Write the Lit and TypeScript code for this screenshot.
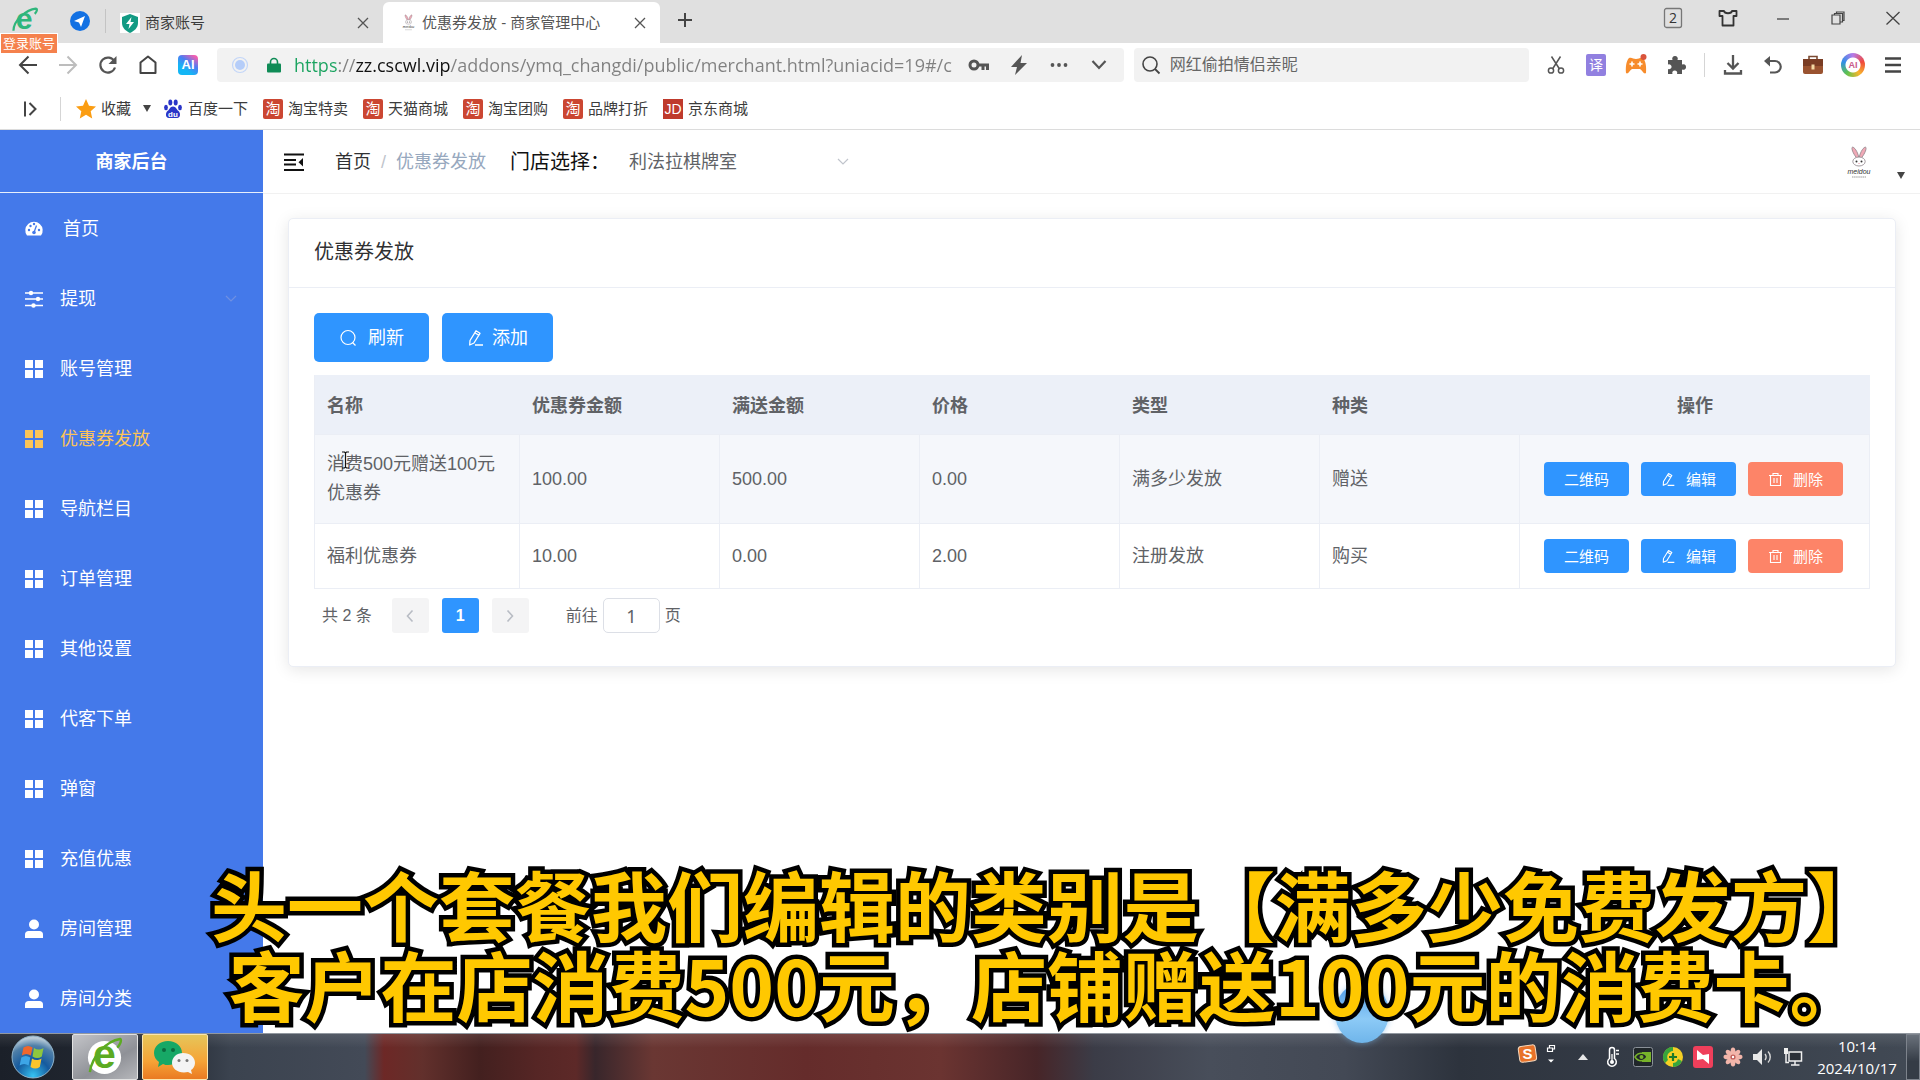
import { LitElement, html, css, svg, nothing, TemplateResult } from "lit";
import { customElement, property, state } from "lit/decorators.js";
import { classMap } from "lit/directives/class-map.js";

/* ---------- shared ---------- */

const base = css`
  *,
  *::before,
  *::after {
    box-sizing: border-box;
  }
  :host {
    display: block;
    font-family: "Liberation Sans", "Noto Sans CJK SC", sans-serif;
  }
  button,
  input,
  select {
    font: inherit;
    color: inherit;
    margin: 0;
    padding: 0;
    border: 0;
    background: none;
    outline: 0;
  }
  button {
    cursor: pointer;
  }
  a {
    color: inherit;
    text-decoration: none;
  }
  svg {
    display: block;
    flex: none;
    overflow: visible;
  }
`;

const icon = (w: number, h: number, body: TemplateResult, box = `0 0 ${w} ${h}`) =>
  html`<svg width=${w} height=${h} viewBox=${box} fill="none" aria-hidden="true">${body}</svg>`;

const rabbit = (w: number, h: number) =>
  icon(
    w,
    h,
    svg`<g stroke="#8d8288" stroke-width=".8">
      <path d="M10.500 13C7 9 4.500 4 5 1.500 6.500-.2 10.500 5 11.700 11z" fill="#f0a9b6"/>
      <path d="M13.500 13C17 9 19.500 4 19 1.500 17.500-.2 13.500 5 12.300 11z" fill="#f0a9b6"/>
      <ellipse cx="12" cy="15.500" rx="6.200" ry="4.500" fill="#fff"/>
    </g>
    <circle cx="9.500" cy="15.500" r="1" fill="#333"/><circle cx="14.500" cy="15.500" r="1" fill="#333"/>
    <path d="M11.500 17.500h1" stroke="#e58a9a"/>
    <text x="12" y="27.500" text-anchor="middle" font-size="7" font-style="italic" fill="#333" font-family="Liberation Sans, sans-serif">meidou</text>
    <path d="M5 31h14" stroke="#999" stroke-width="1" stroke-dasharray="1.500 .6"/>`,
    "-1 0 26 33"
  );

/* ---------- browser window frame ---------- */

const closeX = icon(14, 14, svg`<path d="M2 2l10 10M12 2L2 12" stroke="#555" stroke-width="1.300"/>`);

const I = {
  logo: icon(
    32,
    32,
    svg`<text x="15" y="25" text-anchor="middle" font-family="Liberation Sans, sans-serif" font-weight="700" font-size="34" fill="#2fb67c">e</text>
    <path d="M3 27C3 15 18 3 28 2c2 0 2 3-1 6" stroke="#2fb67c" stroke-width="2.500"/>`,
    "0 -2 32 36"
  ),
  plane: icon(
    22,
    22,
    svg`<circle cx="11" cy="11" r="10" fill="#1371e3"/><path d="M16 6L5 11l5 1.500L12 17z" fill="#fff"/>`
  ),
  shield: icon(
    20,
    20,
    svg`<path d="M0 0h20v20H0z" fill="#fff"/><path d="M10 1l8 3v6c0 5-4 8-8 10-4-2-8-5-8-10V4z" fill="#129a83"/><path d="M11.500 4L6 11h3.500L8.500 16 14 9h-3.500z" fill="#fff"/>`
  ),
  plus: icon(18, 18, svg`<path d="M9 2v14M2 9h14" stroke="#444" stroke-width="2"/>`),
  count: icon(
    20,
    22,
    svg`<rect x="1.500" y="1.500" width="17" height="19" rx="2" stroke="#777" stroke-width="1.300"/><text x="10" y="16" text-anchor="middle" font-size="14" font-family="Open Sans, sans-serif" fill="#333">2</text>`
  ),
  shirt: icon(
    20,
    18,
    svg`<path d="M1.500 2h4.500c.5 3 7.500 3 8 0h4.500v5h-3v9.500h-11V7h-3z" stroke="#333" stroke-width="1.800" stroke-linejoin="round"/>`
  ),
  min: icon(14, 14, svg`<path d="M1 8h12" stroke="#444" stroke-width="1.300"/>`),
  restore: icon(
    16,
    16,
    svg`<path d="M2 5h8v9H2zM4.500 5V3.500h8V12H10.500M6.500 3.500V2H14v8.500h-1.500" stroke="#444" stroke-width="1.200"/>`
  ),
  winClose: icon(16, 16, svg`<path d="M1.500 2l13 12.500M14.500 2l-13 12.500" stroke="#444" stroke-width="1.300"/>`),
  back: icon(20, 20, svg`<path d="M19 10H2M10.500 1.500L2 10l8.500 8.500" stroke="#444" stroke-width="2"/>`),
  forward: icon(20, 20, svg`<path d="M1 10h17M9.500 1.500L18 10l-8.500 8.500" stroke="#bdbdbd" stroke-width="2"/>`),
  reload: icon(
    20,
    20,
    svg`<path d="M17 12.500A7.500 7.500 0 1 1 16.500 6.500" stroke="#555" stroke-width="2.200"/><path d="M18.500 1v8h-8z" fill="#555"/>`
  ),
  home: icon(
    20,
    20,
    svg`<path d="M2.500 7.500L10 1.500l7.500 6V18h-15z" stroke="#444" stroke-width="2" stroke-linejoin="round"/>`
  ),
  ai: html`<span class="ai">AI</span>`,
  site: icon(
    18,
    18,
    svg`<circle cx="9" cy="9" r="7.500" stroke="#c3d6f8" stroke-width="1.200"/><circle cx="9" cy="9" r="5" fill="#b5cdf9"/>`
  ),
  lock: icon(
    14,
    16,
    svg`<path d="M3.500 7V5a3.500 3.500 0 0 1 7 0v2" stroke="#0f8b56" stroke-width="1.600"/><rect y="6.500" width="14" height="9" rx="1" fill="#0f8b56"/>`
  ),
  key: icon(
    22,
    14,
    svg`<circle cx="6" cy="7" r="4" stroke="#555" stroke-width="3"/><path d="M10 7h11M15 7v5M19.500 7v5" stroke="#555" stroke-width="3"/>`
  ),
  bolt: icon(16, 20, svg`<path d="M11 0L0 12h6L4 20 16 8H9.500z" fill="#555"/>`),
  dots: icon(
    18,
    6,
    svg`<circle cx="2.500" cy="3" r="1.900" fill="#555"/><circle cx="9" cy="3" r="1.900" fill="#555"/><circle cx="15.500" cy="3" r="1.900" fill="#555"/>`
  ),
  down: icon(16, 12, svg`<path d="M1.500 2L8 9l6.500-7" stroke="#555" stroke-width="2.200"/>`),
  search: icon(
    20,
    20,
    svg`<circle cx="9" cy="9" r="7" stroke="#444" stroke-width="1.600"/><path d="M14 14l4.500 4.500" stroke="#444" stroke-width="1.800"/>`
  ),
  scissors: icon(
    18,
    20,
    svg`<g stroke="#555" stroke-width="1.500"><path d="M4.500 1.500l8 12.500M13.500 1.500L5.500 14"/><circle cx="4" cy="15.500" r="2.600"/><circle cx="14" cy="15.500" r="2.600"/></g>`
  ),
  translate: html`<span class="tr">译</span>`,
  game: icon(
    24,
    24,
    svg`<path d="M5 5c3-1 4 1 7 1s4-2 7-1c3 3 3.500 10 3 15-2 2-4-3-6-4H8c-2 1-4 6-6 4C1.500 15 2 8 5 5z" fill="#f78c2c"/><path d="M8 8.500v5M5.500 11h5" stroke="#fff" stroke-width="1.600"/><path d="M16 8.500v5M13.500 11h5" stroke="#fff" stroke-width="1.600"/><circle cx="19.500" cy="4" r="3" fill="#d9543c"/>`
  ),
  puzzle: icon(
    20,
    20,
    svg`<path d="M2 5h4.500a2.800 2.800 0 1 1 5 0H16v4.500a2.800 2.800 0 1 1 0 5V19h-5a2.500 2.500 0 1 0-4.500 0H2v-5a2.500 2.500 0 1 0 0-4.500z" fill="#555"/>`
  ),
  download: icon(
    20,
    20,
    svg`<path d="M10 0v13M4.500 8L10 13.500 15.500 8M2 15v3.500h16V15" stroke="#555" stroke-width="2.300"/>`
  ),
  undo: icon(
    20,
    20,
    svg`<path d="M3 6h9a5.500 5.500 0 0 1 0 11.500H7" stroke="#555" stroke-width="2.200"/><path d="M7 1L1 6l6 5.500z" fill="#555"/>`
  ),
  briefcase: icon(
    22,
    20,
    svg`<path d="M7 5V1.500h8V5" stroke="#7b4a32" stroke-width="1.600"/><rect x="1" y="4" width="20" height="15" rx="2" fill="#9a5330"/><path d="M1 4h20v7H1z" fill="#7a3d24"/><rect x="9.500" y="9.500" width="3" height="5" fill="#f3d9a4"/>`
  ),
  menu: icon(18, 18, svg`<path d="M1 2.500h16M1 9h16M1 15.500h16" stroke="#444" stroke-width="2.300"/>`),
  panel: icon(16, 18, svg`<path d="M2 1.500v15" stroke="#444" stroke-width="2"/><path d="M6.500 3l6 6-6 6" stroke="#444" stroke-width="2"/>`),
  star: icon(
    20,
    20,
    svg`<path d="M10 0l3 6.700 7 .7-5.300 4.800L16.200 19.500 10 15.800 3.800 19.500l1.500-7.300L0 7.400l7-.7z" fill="#fb9d12"/>`
  ),
  caret: icon(8, 7, svg`<path d="M0 0h8L4 7z" fill="#444"/>`),
  baidu: icon(
    18,
    20,
    svg`<g fill="#2a35c8"><ellipse cx="6.300" cy="3.500" rx="2" ry="3"/><ellipse cx="11.700" cy="3.500" rx="2" ry="3"/><ellipse cx="2" cy="8.500" rx="1.900" ry="2.700"/><ellipse cx="16" cy="8.500" rx="1.900" ry="2.700"/><path d="M9 7.500c3 0 3.500 3 5.500 4.500s2.500 7-1.500 7c-2 0-6 0-8 0-4 0-3.500-5.500-1.500-7S6 7.500 9 7.500z"/></g><text x="9" y="17.500" text-anchor="middle" font-size="8" font-weight="700" fill="#fff" font-family="Liberation Sans, sans-serif">du</text>`
  ),
};

const bookmarks = [
  { name: "淘宝特卖", mark: "淘", jd: false },
  { name: "天猫商城", mark: "淘", jd: false },
  { name: "淘宝团购", mark: "淘", jd: false },
  { name: "品牌打折", mark: "淘", jd: false },
  { name: "京东商城", mark: "JD", jd: true },
];

@customElement("browser-frame")
export class BrowserFrame extends LitElement {
  static styles = [
    base,
    css`
      :host {
        font-size: 15px;
        line-height: 20px;
        color: #3c3c3c;
      }
      .tabs {
        display: flex;
        align-items: flex-end;
        height: 43px;
        background: #e0e0e0;
      }
      .brand {
        position: relative;
        display: flex;
        align-items: center;
        gap: 28px;
        width: 106px;
        height: 43px;
        padding: 0 0 2px 9px;
      }
      .brand::after {
        content: "";
        width: 1px;
        height: 24px;
        margin-left: -14px;
        background: #c4c4c4;
      }
      .badge {
        position: absolute;
        z-index: 2;
        left: 0;
        top: 33px;
        padding: 0 2px;
        border: 1px solid #fff;
        background: #f5814d;
        color: #fff;
        font-size: 13px;
        line-height: 19px;
        white-space: nowrap;
      }
      .tab {
        display: flex;
        align-items: center;
        width: 277px;
        height: 41px;
        padding: 0 13px 0 14px;
        border-radius: 6px 6px 0 0;
      }
      .tab.on {
        padding-left: 19px;
        background: #fff;
      }
      .tab.on .title {
        gap: 7px;
        color: #555;
      }
      .title {
        display: flex;
        flex: 1;
        align-items: center;
        gap: 5px;
        text-align: left;
        white-space: nowrap;
      }
      .new {
        height: 43px;
        margin: 0 16px 2px;
      }
      .win {
        display: flex;
        align-self: flex-start;
        margin-left: auto;
        height: 35px;
      }
      .win button {
        display: grid;
        place-items: center;
        width: 55px;
      }
      .bar {
        display: flex;
        align-items: center;
        height: 44px;
        padding: 0 7px 0 8px;
        background: #fff;
      }
      .cell {
        display: grid;
        place-items: center;
        width: 40px;
        height: 40px;
        flex: none;
      }
      .split {
        width: 1px;
        height: 24px;
        margin: 0 8px;
        background: #d5d5d5;
      }
      .ai {
        width: 20px;
        height: 20px;
        border-radius: 4px;
        background: linear-gradient(35deg, #14b6f5 30%, #4d7df2 60%, #f25fb0 90%);
        color: #fff;
        font-size: 13px;
        font-weight: 700;
      }
      .ring {
        display: grid;
        place-items: center;
        width: 24px;
        height: 24px;
        border-radius: 50%;
        background: radial-gradient(circle, #fff 0 7px, transparent 8px),
          conic-gradient(#b67be8, #f0483c, #f7b52c, #5fc24f, #2f8fe8, #b67be8);
        color: #c85a8a;
        font-size: 9px;
        font-weight: 700;
      }
      .tr {
        width: 20px;
        height: 22px;
        border-radius: 2px;
        background: #9180e0;
        color: #fff;
        font-size: 14px;
        line-height: 22px;
      }
      .field {
        display: flex;
        align-items: center;
        min-width: 0;
        height: 34px;
        border-radius: 4px;
        background: #f2f2f2;
      }
      .address {
        flex: 16 1 0;
        margin: 0 10px 0 9px;
        padding: 0 5px 0 14px;
      }
      .find {
        flex: 7 1 0;
        margin-right: 7px;
        padding-left: 7px;
      }
      .field input {
        flex: 1;
        min-width: 0;
        height: 30px;
      }
      .address .lock {
        margin: 0 13px 0 18px;
      }
      .address input {
        font-family: "Open Sans", sans-serif;
        font-size: 18px;
        background: linear-gradient(
          90deg,
          #19a35f 0 44px,
          #808080 44px 62px,
          #111 62px 157px,
          #808080 157px
        );
        -webkit-background-clip: text;
        background-clip: text;
        -webkit-text-fill-color: transparent;
      }
      .find input {
        margin-left: 9px;
        font-size: 16px;
      }
      .find input::placeholder {
        color: #666;
        opacity: 1;
      }
      .marks {
        display: flex;
        align-items: center;
        height: 43px;
        padding: 1px 0 0 23px;
        border-bottom: 1px solid #dcdcdc;
        background: #fff;
      }
      .marks .split {
        margin: 0 15px 0 21px;
      }
      .mark {
        display: flex;
        align-items: center;
        gap: 5px;
        margin-right: 15px;
        white-space: nowrap;
      }
      .mark.fav {
        margin-right: 13px;
      }
      .mark.fav span {
        margin-right: 7px;
      }
      .mark.baidu {
        gap: 6px;
      }
      .chip {
        width: 20px;
        height: 20px;
        border-radius: 2px;
        background: #cb4632;
        color: #fff;
        font-size: 15px;
        text-align: center;
      }
      .chip.jd {
        border-radius: 0;
        background: #bf3a2c;
        font-size: 14px;
      }
    `,
  ];

  private cell(label: string, glyph: unknown) {
    return html`<button class="cell" aria-label=${label}>${glyph}</button>`;
  }

  render() {
    return html`
      <div class="tabs">
        <div class="brand">${I.logo}${I.plane}<span class="badge">登录账号</span></div>
        <div class="tab">
          <button class="title">${I.shield}商家账号</button>
          <button aria-label="关闭">${closeX}</button>
        </div>
        <div class="tab on">
          <button class="title">${rabbit(13, 17)}优惠券发放 - 商家管理中心</button>
          <button aria-label="关闭">${closeX}</button>
        </div>
        <button class="new" aria-label="新建">${I.plus}</button>
        <div class="win">
          <button aria-label="窗口">${I.count}</button>
          <button aria-label="皮肤">${I.shirt}</button>
          <button aria-label="最小化">${I.min}</button>
          <button aria-label="还原">${I.restore}</button>
          <button aria-label="关闭">${I.winClose}</button>
        </div>
      </div>
      <div class="bar">
        ${this.cell("后退", I.back)}${this.cell("前进", I.forward)}${this.cell("刷新", I.reload)}
        ${this.cell("主页", I.home)}${this.cell("AI", I.ai)}
        <div class="field address">
          ${I.site}<span class="lock">${I.lock}</span>
          <input
            aria-label="地址"
            value="https://zz.cscwl.vip/addons/ymq_changdi/public/merchant.html?uniacid=19#/c"
          />
          ${this.cell("密码", I.key)}${this.cell("加速", I.bolt)}${this.cell("更多", I.dots)}
          ${this.cell("展开", I.down)}
        </div>
        <div class="field find">
          ${I.search}<input aria-label="搜索" placeholder="网红偷拍情侣亲昵" />
        </div>
        ${this.cell("截图", I.scissors)}${this.cell("翻译", I.translate)}${this.cell("游戏", I.game)}
        ${this.cell("扩展", I.puzzle)}<span class="split"></span>${this.cell("下载", I.download)}
        ${this.cell("恢复", I.undo)}${this.cell("工具", I.briefcase)}
        ${this.cell("AI", html`<span class="ring">AI</span>`)}${this.cell("菜单", I.menu)}
      </div>
      <nav class="marks">
        ${I.panel}<span class="split"></span>
        <a class="mark fav" href="#fav">${I.star}<span>收藏</span>${I.caret}</a>
        <a class="mark baidu" href="#baidu">${I.baidu}百度一下</a>
        ${bookmarks.map(
          (b) => html`<a class="mark" href="#mark"
            ><span class=${classMap({ chip: true, jd: b.jd })}>${b.mark}</span>${b.name}</a
          >`
        )}
      </nav>
    `;
  }
}

/* ---------- merchant back office ---------- */

const glyph = {
  dash: icon(
    18,
    18,
    svg`<path d="M2 15.500A8.700 8.700 0 1 1 16 15.500z" fill="currentColor"/><g fill="#4479ea"><circle cx="4" cy="10" r="1.200"/><circle cx="5.500" cy="6" r="1.200"/><circle cx="9" cy="4" r="1.200"/><circle cx="14" cy="10" r="1.200"/><circle cx="9" cy="12.500" r="1.800"/></g><path d="M9 12.500l2.500-7" stroke="#4479ea" stroke-width="1.300"/>`
  ),
  sliders: icon(
    18,
    18,
    svg`<path d="M0 3h18M0 9h18M0 15.500h18" stroke="currentColor" stroke-width="1.600"/><circle cx="6" cy="3" r="2.200" fill="currentColor"/><circle cx="13" cy="9" r="2.200" fill="currentColor"/><circle cx="8.500" cy="15.500" r="2.200" fill="currentColor"/>`
  ),
  grid: icon(
    18,
    18,
    svg`<path d="M0 0h8v8H0zM10 0h8v8h-8zM0 10h8v8H0zM10 10h8v8h-8z" fill="currentColor"/>`
  ),
  user: icon(
    18,
    20,
    svg`<circle cx="9" cy="5.500" r="5" fill="currentColor"/><path d="M0 19v-3.500c0-2 1.500-3.500 3.500-3.500h11c2 0 3.500 1.500 3.500 3.500V19z" fill="currentColor"/>`
  ),
  chevron: icon(12, 8, svg`<path d="M1 1l5 5 5-5" stroke="currentColor" stroke-width="1.200"/>`),
  fold: icon(
    20,
    18,
    svg`<path d="M0 1.500h20M0 7h12M0 11.500h12M0 17h20" stroke="#111" stroke-width="1.900"/><path d="M19 5v8.500l-4.500-4.200z" fill="#111"/>`
  ),
  search: icon(
    18,
    18,
    svg`<circle cx="9" cy="8.500" r="7" stroke="currentColor" stroke-width="1.200"/><path d="M13.500 13.500l3 3" stroke="currentColor" stroke-width="1.200"/>`
  ),
  edit: (s: number) =>
    icon(
      s,
      s,
      svg`<path d="M3 11.500L9 1.800l4 2.500-6 9.700-4.300 2zM7.800 3.800l4 2.500M8 16h8" stroke="currentColor" stroke-width="1.300" stroke-linejoin="round"/>`,
      "0 0 18 18"
    ),
  trash: icon(
    15,
    15,
    svg`<path d="M1 3.500h13M5 3V1.500h5V3M2.500 3.500V13.500h10V3.500M6 6v5M9 6v5" stroke="currentColor" stroke-width="1.100"/>`
  ),
};

const menu = [
  { name: "首页", icon: glyph.dash, wide: true },
  { name: "提现", icon: glyph.sliders, sub: true },
  { name: "账号管理", icon: glyph.grid },
  { name: "优惠券发放", icon: glyph.grid },
  { name: "导航栏目", icon: glyph.grid },
  { name: "订单管理", icon: glyph.grid },
  { name: "其他设置", icon: glyph.grid },
  { name: "代客下单", icon: glyph.grid },
  { name: "弹窗", icon: glyph.grid },
  { name: "充值优惠", icon: glyph.grid },
  { name: "房间管理", icon: glyph.user },
  { name: "房间分类", icon: glyph.user },
] as { name: string; icon: TemplateResult; sub?: boolean; wide?: boolean }[];

const coupons = [
  { name: "消费500元赠送100元优惠券", amount: "100.00", reach: "500.00", price: "0.00", type: "满多少发放", kind: "赠送" },
  { name: "福利优惠券", amount: "10.00", reach: "0.00", price: "2.00", type: "注册发放", kind: "购买" },
];

@customElement("merchant-page")
export class MerchantPage extends LitElement {
  @property() current = "优惠券发放";
  @state() private hovered = 0;

  static styles = [
    base,
    css`
      :host {
        display: flex;
        font-size: 18px;
        line-height: 28px;
        color: #606266;
        background: #fff;
      }
      .side {
        flex: none;
        width: 263px;
        background: #4479ea;
        color: #fff;
      }
      .shop {
        height: 63px;
        padding: 18px 0;
        border-bottom: 1px solid #e8effc;
        font-weight: 700;
        text-align: center;
      }
      .item {
        display: flex;
        align-items: center;
        gap: 17px;
        height: 70px;
        padding: 2px 26px 0 25px;
      }
      .item.wide {
        gap: 20px;
      }
      .item.on {
        color: #fbc458;
      }
      .item .more {
        margin-left: auto;
        color: #6f90e2;
      }
      .main {
        flex: 1;
        min-width: 0;
      }
      .top {
        display: flex;
        align-items: center;
        height: 64px;
        padding: 1px 15px 0 21px;
        border-bottom: 1px solid #f1f1f1;
        color: #303133;
      }
      .crumbs {
        display: flex;
        gap: 10px;
        margin: 0 24px 0 31px;
      }
      .crumbs span {
        color: #97a8be;
      }
      .crumbs .sep {
        color: #c0c4cc;
      }
      .top label {
        font-size: 20px;
        color: #111;
      }
      .pick {
        display: grid;
        align-items: center;
        width: 220px;
        margin-left: 19px;
        color: #606266;
      }
      .pick > * {
        grid-area: 1 / 1;
      }
      .pick select {
        appearance: none;
        height: 40px;
      }
      .pick svg {
        justify-self: end;
        color: #c0c4cc;
        pointer-events: none;
      }
      .avatar {
        display: flex;
        align-items: flex-end;
        gap: 25px;
        margin-left: auto;
        color: #555;
      }
      .card {
        margin: 24px 24px 24px 25px;
        border: 1px solid #ebeef5;
        border-radius: 5px;
        background: #fff;
        box-shadow: 0 3px 16px rgba(0, 0, 0, 0.1);
      }
      .card h2 {
        margin: 0;
        padding: 19px 25px 21px;
        border-bottom: 1px solid #ebeef5;
        font-size: 20px;
        font-weight: 400;
        color: #303133;
      }
      .body {
        padding: 25px 25px 33px;
      }
      .actions {
        display: flex;
        gap: 13px;
        margin-bottom: 13px;
      }
      .btn {
        display: flex;
        align-items: center;
        gap: 11px;
        height: 49px;
        padding: 0 25px;
        border-radius: 5px;
        background: #2f95ff;
        color: #fff;
        white-space: nowrap;
      }
      .btn.near {
        gap: 7px;
      }
      .btn.small {
        gap: 10px;
        height: 34px;
        padding: 0 20px;
        border-radius: 4px;
        font-size: 15px;
      }
      .btn.danger {
        background: #fd8468;
      }
      table {
        width: 100%;
        table-layout: fixed;
        border-collapse: separate;
        border-spacing: 0;
        border: solid #ebeef5;
        border-width: 0 0 0 1px;
      }
      .c-name {
        width: 205px;
      }
      .c-ops {
        width: 350px;
      }
      th,
      td {
        padding: 15px 12px;
        border-bottom: 1px solid #ebeef5;
        text-align: left;
      }
      td {
        height: 65px;
        padding: 15px 14px 15px 12px;
        border-right: 1px solid #ebeef5;
        line-height: 29px;
      }
      th {
        height: 60px;
        padding: 17px 12px 14px;
        background: #ecf0f8;
      }
      th:last-child {
        text-align: center;
      }
      .hover td {
        height: 89px;
        background: #f5f7fb;
      }
      .ops {
        display: flex;
        justify-content: center;
        gap: 12px;
      }
      .pager {
        display: flex;
        align-items: center;
        gap: 13px;
        margin-top: 9px;
        padding-left: 8px;
        font-size: 16px;
      }
      .pager .total {
        margin-right: 7px;
      }
      .pager button {
        display: grid;
        place-items: center;
        width: 37px;
        height: 35px;
        border-radius: 3px;
        background: #f4f4f5;
        color: #b8bcc4;
      }
      .pager .now {
        background: #2f95ff;
        color: #fff;
        font-weight: 700;
      }
      .jump {
        display: flex;
        align-items: center;
        gap: 5px;
        margin-left: 24px;
      }
      .jump input {
        width: 57px;
        height: 35px;
        border: 1px solid #dcdfe6;
        border-radius: 5px;
        font-family: "Noto Sans", sans-serif;
        font-size: 18px;
        text-align: center;
      }
    `,
  ];

  private arrow(d: string) {
    return icon(10, 14, svg`<path d=${d} stroke="currentColor" stroke-width="1.600"/>`);
  }

  render() {
    return html`
      <aside class="side">
        <div class="shop">商家后台</div>
        <nav>
          ${menu.map(
            (m) => html`<a
              class=${classMap({ item: true, on: m.name === this.current, wide: !!m.wide })}
              href="#menu"
              >${m.icon}<span>${m.name}</span>${m.sub
                ? html`<span class="more">${glyph.chevron}</span>`
                : nothing}</a
            >`
          )}
        </nav>
      </aside>
      <section class="main">
        <header class="top">
          <button aria-label="收起菜单">${glyph.fold}</button>
          <nav class="crumbs">
            <a href="#home">首页</a><span class="sep">/</span><span>${this.current}</span>
          </nav>
          <label for="store">门店选择：</label>
          <div class="pick">
            <select id="store">
              <option>利法拉棋牌室</option>
            </select>
            ${glyph.chevron}
          </div>
          <button class="avatar" aria-label="账户">${rabbit(26, 33)}${I.caret}</button>
        </header>
        <div class="card">
          <h2>${this.current}</h2>
          <div class="body">
            <div class="actions">
              <button class="btn">${glyph.search}刷新</button>
              <button class="btn near">${glyph.edit(18)}添加</button>
            </div>
            <table>
              <colgroup>
                <col class="c-name" />
                <col span="5" />
                <col class="c-ops" />
              </colgroup>
              <thead>
                <tr>
                  ${["名称", "优惠券金额", "满送金额", "价格", "类型", "种类", "操作"].map(
                    (t) => html`<th>${t}</th>`
                  )}
                </tr>
              </thead>
              <tbody>
                ${coupons.map(
                  (c, i) => html`<tr
                    class=${classMap({ hover: i === this.hovered })}
                  >
                    <td>${c.name}</td>
                    <td>${c.amount}</td>
                    <td>${c.reach}</td>
                    <td>${c.price}</td>
                    <td>${c.type}</td>
                    <td>${c.kind}</td>
                    <td>
                      <div class="ops">
                        <button class="btn small">二维码</button>
                        <button class="btn small">${glyph.edit(15)}编辑</button>
                        <button class="btn small danger">${glyph.trash}删除</button>
                      </div>
                    </td>
                  </tr>`
                )}
              </tbody>
            </table>
            <div class="pager">
              <span class="total">共 2 条</span>
              <button aria-label="上一页" disabled>${this.arrow("M7.500 1.500L2.500 7l5 5.500")}</button>
              <button class="now">1</button>
              <button aria-label="下一页" disabled>${this.arrow("M2.500 1.500L7.500 7l-5 5.500")}</button>
              <div class="jump">
                <label for="page">前往</label><input id="page" value="1" /><span>页</span>
              </div>
            </div>
          </div>
        </div>
      </section>
    `;
  }
}

/* ---------- desktop task bar ---------- */

const tray = {
  orb: icon(
    44,
    44,
    svg`<defs><radialGradient id="orb" cx=".5" cy=".95" r=".9"><stop offset="0" stop-color="#35c3f3"/><stop offset=".45" stop-color="#155a9e"/><stop offset=".8" stop-color="#4f7fa8"/><stop offset="1" stop-color="#b9cbd8"/></radialGradient></defs>
    <circle cx="22" cy="22" r="21" fill="url(#orb)" stroke="#8fb4cc" stroke-width="1"/>
    <path d="M12.500 12.500c3-2 6-2 9 0l-1.700 8c-3-2-6-2-9 0z" fill="#f0672c"/>
    <path d="M23 13c3 2 6 2 9.500 0l-1.700 8.500c-3 2-6 2-9.300 0z" fill="#8fc73e"/>
    <path d="M10.300 22.500c3-2 6-2 9 0l-1.700 8c-3-2-6-2-9 0z" fill="#3da5e6"/>
    <path d="M21 23.500c3 2 6 2 9.500 0l-1.700 8.500c-3 2-6 2-9.300 0z" fill="#fbc52c"/>`
  ),
  browser: icon(
    40,
    40,
    svg`<circle cx="20" cy="21" r="17" fill="#fff"/><text x="20" y="32" text-anchor="middle" font-size="42" font-weight="700" fill="#5cab22" font-family="Liberation Sans, sans-serif">e</text><path d="M5 36C7 20 22 4 36 2c2 1 0 6-3 9" stroke="#5cab22" stroke-width="2.500"/>`,
    "0 0 41 41"
  ),
  chat: icon(
    42,
    36,
    svg`<path d="M14 2c8 0 14 5 14 12s-6 12-14 12c-2 0-3 0-5-1l-5 3 1-5C2 21 0 18 0 14 0 7 6 2 14 2z" fill="#17a866"/><circle cx="10" cy="11" r="2" fill="#0b6b3f"/><circle cx="19" cy="11" r="2" fill="#0b6b3f"/><path d="M29 14c7 0 12 4 12 10 0 3-2 6-4 7l1 4-4-2c-9 2-16-3-16-9s5-10 11-10z" fill="#f4f4f4"/><circle cx="25" cy="21.500" r="1.500" fill="#777"/><circle cx="33" cy="21.500" r="1.500" fill="#777"/>`
  ),
  ime: icon(
    20,
    20,
    svg`<rect x="1" y="1.500" width="17" height="16" rx="3" fill="#e8732a" stroke="#f7d9bd" transform="rotate(-8 10 10)"/><text x="9.500" y="15" text-anchor="middle" font-size="15" font-weight="700" fill="#fff" font-family="Liberation Sans, sans-serif">S</text>`
  ),
  lang: icon(
    10,
    20,
    svg`<path d="M1.500 4h5v3.500h-5zM3.500 4V1.500h5V5H6.500" stroke="#fff" stroke-width="1.200"/><path d="M2 15.500h6L5 18.500z" fill="#fff"/>`
  ),
  up: icon(10, 6, svg`<path d="M0 6l5-6 5 6z" fill="#e8e8e8"/>`),
  thermo: icon(
    14,
    20,
    svg`<path d="M3.500 3a2.500 2.500 0 0 1 5 0v8.500a4.300 4.300 0 1 1-5 0z" stroke="#fff" stroke-width="1.500"/><circle cx="6" cy="15" r="2" fill="#fff"/><path d="M6 7v8M10 3.500h3M10 7h3" stroke="#fff" stroke-width="1.300"/>`
  ),
  nvidia: icon(
    20,
    20,
    svg`<rect x=".5" y=".5" width="19" height="19" rx="2" fill="#20262a" stroke="#8a9098"/><path d="M9 5h9v10H9z" fill="#78b42a"/><path d="M2 10c3-5 10-5 12 0-3 5-9 5-12 0z" stroke="#78b42a" stroke-width="1.500" fill="#20262a"/><circle cx="8.500" cy="10" r="2" fill="#78b42a"/>`
  ),
  guard: icon(
    22,
    22,
    svg`<circle cx="11" cy="11" r="10" fill="#f6cf24"/><path d="M11 1a10 10 0 0 0-8 16l3-3a6 6 0 0 1 5-9z" fill="#37a53c"/><path d="M11 21a10 10 0 0 0 9-6l-4-2c-1 3-3 4-5 4z" fill="#37a53c"/><path d="M11 7v8M7 11h8" stroke="#1d7a2a" stroke-width="2.200"/>`
  ),
  red: icon(20, 22, svg`<rect width="20" height="22" rx="3" fill="#ef3f5b"/><path d="M4 4l6 5 6-1v10l-6-5-6 1z" fill="#fff"/>`),
  flower: icon(
    20,
    20,
    svg`<g fill="#f2b5aa">${[0, 45, 90, 135, 180, 225, 270, 315].map(
      (a) => svg`<ellipse cx="10" cy="4.500" rx="2.400" ry="4" transform="rotate(${a} 10 10)"/>`
    )}</g><circle cx="10" cy="10" r="2.600" fill="#c2605a"/><circle cx="10" cy="10" r="1.200" fill="#fff"/>`
  ),
  sound: icon(
    20,
    18,
    svg`<path d="M0 6h4l5-5v16l-5-5H0z" fill="#e8e8e8"/><path d="M12 6c1.500 2 1.500 4 0 6M15 3.500c3 3 3 8 0 11" stroke="#d8d8d8" stroke-width="1.400"/>`
  ),
  net: icon(
    20,
    20,
    svg`<rect x="6" y="5" width="12.500" height="9" fill="#2a3038" stroke="#f0f0f0" stroke-width="1.500"/><path d="M12 14v3.500M8 18h8.500M3 7v8.500h3" stroke="#f0f0f0" stroke-width="1.500"/><path d="M1 1h4v6H1z" fill="#f0f0f0"/>`
  ),
};

@customElement("task-bar")
export class TaskBar extends LitElement {
  static styles = [
    base,
    css`
      :host {
        display: flex;
        align-items: stretch;
        height: 47px;
        padding-left: 11px;
        border-top: 1px solid #9298a0;
        color: #fff;
        background: linear-gradient(rgba(255, 255, 255, 0.1), transparent 30%),
          linear-gradient(
            90deg,
            #1b2029 0,
            #252b35 9%,
            #3b434f 12%,
            #434a57 19%,
            #6d2826 20%,
            #62302c 22%,
            #43201f 25%,
            #562625 28%,
            #5d2928 30%,
            #38262b 31%,
            #6a3733 34%,
            #652c2b 42%,
            #6b3431 49%,
            #472528 54%,
            #3b3c47 57%,
            #484e5a 63%,
            #434955 70%,
            #2d333d 76%,
            #343b46 85%,
            #424a55 100%
          );
      }
      button {
        display: grid;
        place-items: center;
      }
      .start {
        width: 44px;
        margin-right: 17px;
      }
      .app {
        width: 66px;
        margin-right: 4px;
        border: 1px solid #e2e2e2;
        border-radius: 2px;
        background: linear-gradient(150deg, #c3c4c8, #8f9197 60%, #b6b7bb);
      }
      .app.chat {
        border-color: #fbe5ae;
        background: linear-gradient(#e6c65a, #f6a336 60%, #ea7a22);
      }
      .tray {
        display: flex;
        align-items: center;
        margin-left: auto;
      }
      .ime {
        display: flex;
        gap: 8px;
        margin: 0 12px 6px 0;
      }
      .slot {
        width: 30px;
        height: 40px;
      }
      .clock {
        width: 98px;
        font-family: "Open Sans", sans-serif;
        font-size: 15px;
        line-height: 22px;
        text-align: center;
      }
      .desk {
        width: 14px;
        height: 46px;
        border: 1px solid #7d838c;
        background: linear-gradient(#6a717b, #353c46 60%);
      }
    `,
  ];

  render() {
    const slots: [string, TemplateResult][] = [
      ["显示图标", tray.up],
      ["温度", tray.thermo],
      ["显卡", tray.nvidia],
      ["卫士", tray.guard],
      ["录屏", tray.red],
      ["工具", tray.flower],
      ["音量", tray.sound],
      ["网络", tray.net],
    ];
    return html`
      <button class="start" aria-label="开始">${tray.orb}</button>
      <button class="app" aria-label="浏览器">${tray.browser}</button>
      <button class="app chat" aria-label="微信">${tray.chat}</button>
      <div class="tray">
        <div class="ime">${tray.ime}${tray.lang}</div>
        ${slots.map(([t, g]) => html`<button class="slot" aria-label=${t}>${g}</button>`)}
        <div class="clock"><div>10:14</div><div>2024/10/17</div></div>
        <button class="desk" aria-label="显示桌面"></button>
      </div>
    `;
  }
}

/* ---------- root ---------- */

@customElement("app-root")
export class AppRoot extends LitElement {
  static styles = [
    base,
    css`
      :host {
        position: relative;
        display: flex;
        flex-direction: column;
        min-height: 100vh;
        overflow: hidden;
      }
      merchant-page {
        display: flex;
        flex: 1;
      }
      .ball {
        position: absolute;
        right: 531px;
        bottom: 37px;
        width: 54px;
        height: 60px;
        border-radius: 50%;
        background: linear-gradient(#4f9be8, #8ccaf6 60%, #6fb5ea);
        box-shadow: 0 0 6px rgba(120, 180, 230, 0.6);
      }
      .pointer {
        position: absolute;
        left: 341px;
        top: 451px;
      }
      .caption {
        position: absolute;
        left: 174px;
        right: 0;
        bottom: 57px;
        display: flex;
        flex-direction: column;
        align-items: center;
        margin: 0;
        color: #ffc800;
        font-family: "Noto Sans CJK SC", sans-serif;
        font-size: 76px;
        font-weight: 700;
        line-height: 80px;
        white-space: nowrap;
        -webkit-text-stroke: 9px #000;
        paint-order: stroke fill;
        stroke-linejoin: round;
        pointer-events: none;
      }
    `,
  ];

  render() {
    return html`
      <browser-frame></browser-frame>
      <merchant-page></merchant-page>
      <task-bar></task-bar>
      <div class="ball"></div>
      <div class="pointer">
        ${icon(9, 18, svg`<path d="M1 1h2.500l1 1 1-1H8M4.500 2v14M1 17h2.500l1-1 1 1H8" stroke="#111" stroke-width="1.200"/>`)}
      </div>
      <p class="caption">
        <span>头一个套餐我们编辑的类别是【满多少免费发方】</span>
        <span>客户在店消费500元，店铺赠送100元的消费卡。</span>
      </p>
    `;
  }
}
